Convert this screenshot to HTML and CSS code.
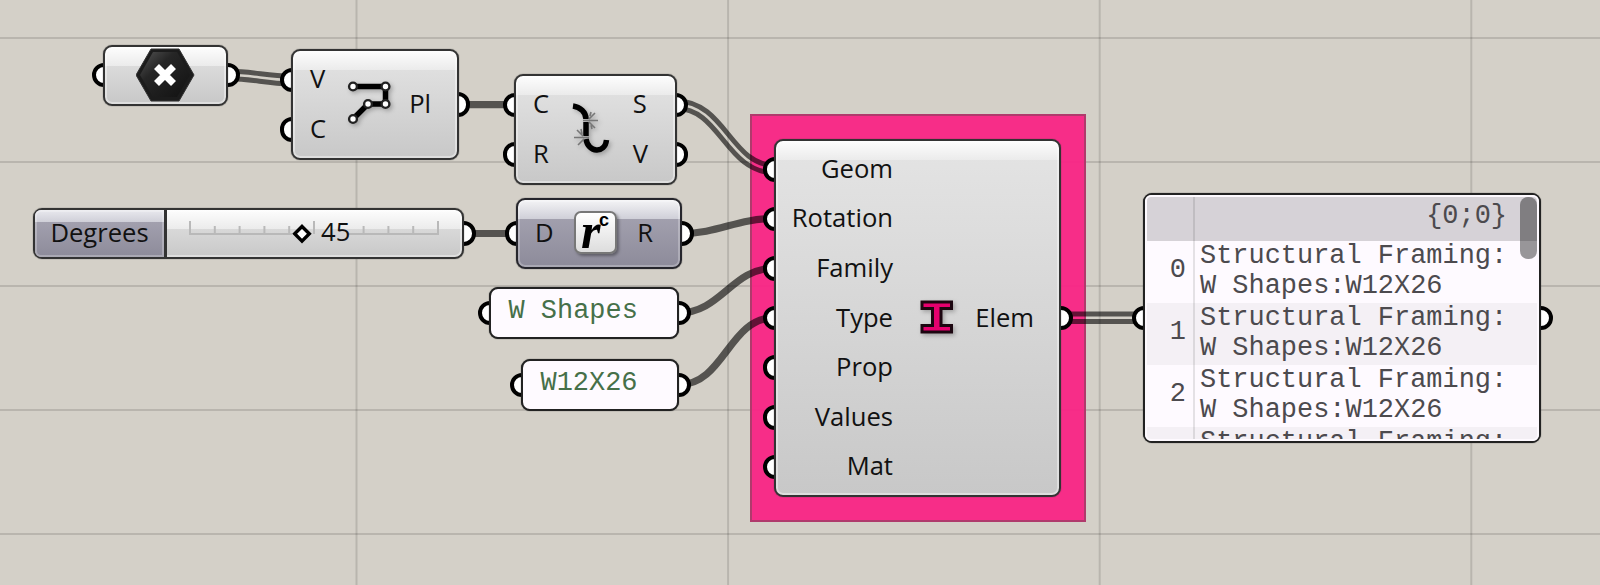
FILE: index.html
```html
<!DOCTYPE html>
<html lang="en">
<head>
    <meta charset="UTF-8">
    <meta name="viewport" content="width=device-width, initial-scale=1.0">
    <title>Structural Framing</title>
    <link rel="stylesheet" href="styles.css">
</head>
<body>
    <div class="canvas">
        <div class="group"></div>

        <!-- WIRES -->
        <svg class="wires" width="1600" height="585" viewBox="0 0 1600 585">
            <defs>
                <mask id="split" maskUnits="userSpaceOnUse" x="0" y="0" width="1600" height="585">
                    <rect width="1600" height="585" fill="#fff"/>
                    <g fill="none" stroke="#000" stroke-width="2.5">
                        <path d="M229 75C254 75 266 80 291 80"/>
                        <path d="M677 104.7C722 104.7 729 169 774 169"/>
                        <path d="M1060 317.8H1143"/>
                    </g>
                </mask>
            </defs>
            <g class="list" mask="url(#split)">
                <path d="M229 75C254 75 266 80 291 80"/>
                <path d="M677 104.7C722 104.7 729 169 774 169"/>
                <path d="M1060 317.8H1143"/>
            </g>
            <g class="item">
                <path d="M459 104.7H514"/>
                <path d="M463 233.5H516"/>
                <path d="M681 233.5C719 233.5 736 218.6 774 218.6"/>
                <path d="M679 312.8C721 312.8 732 268.2 774 268.2"/>
                <path d="M679 384.7C724 384.7 729 317.8 774 317.8"/>
            </g>
        </svg>

        <!-- COMPONENTS -->
        <div class="node vertices">
            <i class="port in"></i>
            <svg width="60" height="54" viewBox="0 0 60 54">
                <defs>
                    <linearGradient id="hex" x1="0" y1="0" x2="1" y2="1">
                        <stop offset="0" stop-color="#555"/>
                        <stop offset=".35" stop-color="#262626"/>
                        <stop offset="1" stop-color="#111"/>
                    </linearGradient>
                </defs>
                <path d="M15 1H43L58 27L43 53H15L0 27Z" fill="#1c1c1c" stroke="#333" stroke-width="1"/>
                <path d="M17 4H41L54 27L41 49H17L4 27Z" fill="url(#hex)"/>
                <path d="M20.500 18.500L37.500 35.500M37.500 18.500L20.500 35.500" stroke="#fff" stroke-width="7"/>
            </svg>
            <i class="port out"></i>
        </div>

        <div class="node polyline">
            <div class="inputs">
                <div class="row"><i class="port in"></i>V</div>
                <div class="row"><i class="port in"></i>C</div>
            </div>
            <svg class="icon" width="50" height="50" viewBox="0 0 50 50">
                <path d="M10 6.500H42.500V24H25L10 39" fill="none" stroke="#000" stroke-width="5.500"/>
                <g fill="#fff" stroke="#222" stroke-width="2.4">
                    <circle cx="10" cy="6.500" r="3.900"/>
                    <circle cx="42.500" cy="6.500" r="3.900"/>
                    <circle cx="42.500" cy="24" r="3.900"/>
                    <circle cx="25" cy="24" r="3.900"/>
                    <circle cx="10" cy="39" r="3.900"/>
                </g>
            </svg>
            <div class="outputs">
                <div class="row">Pl<i class="port out"></i></div>
            </div>
        </div>

        <div class="node shatter">
            <div class="inputs">
                <div class="row"><i class="port in"></i>C</div>
                <div class="row"><i class="port in"></i>R</div>
            </div>
            <svg class="icon" width="50" height="60" viewBox="0 0 50 60">
                <g fill="none" stroke="#000" stroke-width="5.500">
                    <path d="M7 6C14 7 20 12 20 19"/>
                    <path d="M20 22V36"/>
                    <path d="M20 39C22 53 39 54 40.500 40"/>
                </g>
                <g stroke="#777" stroke-width="1.6">
                    <path d="M17 20.500H32M23 19L29 13M23 22L29 28M24 16L25 12M25 25L26 29"/>
                    <path d="M8 37.500H23M11 30L17 36M12 45L18 39M15 29L16 34"/>
                </g>
            </svg>
            <div class="outputs">
                <div class="row">S<i class="port out"></i></div>
                <div class="row">V<i class="port out"></i></div>
            </div>
        </div>

        <div class="node slider">
            <div class="name">Degrees</div>
            <div class="track">
                <svg width="290" height="47" viewBox="0 0 290 47">
                    <path class="rail" d="M23 11V24H125M181 24H271V11M47.8 16V24M72.6 16V24M97.4 16V24M122.2 16V24M147 11V24M196.6 16V24M221.4 16V24M246.2 16V24"/>
                    <path d="M135 16.500L142.300 23.800L135 31.100L127.700 23.800Z" fill="#fff" stroke="#000" stroke-width="3.4"/>
                </svg>
                <span class="value">45</span>
            </div>
            <i class="port out"></i>
        </div>

        <div class="node radians dark">
            <div class="inputs">
                <div class="row"><i class="port in"></i>D</div>
            </div>
            <div class="badge">r<sup>c</sup></div>
            <div class="outputs">
                <div class="row">R<i class="port out"></i></div>
            </div>
        </div>

        <div class="node note family"><i class="port in"></i>W Shapes<i class="port out"></i></div>
        <div class="node note type"><i class="port in"></i>W12X26<i class="port out"></i></div>

        <div class="node element">
            <div class="inputs">
                <div class="row"><i class="port in"></i>Geom</div>
                <div class="row"><i class="port in"></i>Rotation</div>
                <div class="row"><i class="port in"></i>Family</div>
                <div class="row"><i class="port in"></i>Type</div>
                <div class="row"><i class="port in"></i>Prop</div>
                <div class="row"><i class="port in"></i>Values</div>
                <div class="row"><i class="port in"></i>Mat</div>
            </div>
            <svg class="icon" width="34" height="36" viewBox="0 0 34 36">
                <path d="M2 2H31.500V8.500H21V25.500H31.500V32H2V25.500H12.500V8.500H2Z" fill="#e6006e" stroke="#1c0610" stroke-width="3"/>
            </svg>
            <div class="outputs">
                <div class="row">Elem<i class="port out"></i></div>
            </div>
        </div>

        <!-- OUTPUT PANEL -->
        <div class="node panel">
            <i class="port in"></i>
            <div class="sheet">
                <div class="path">{0;0}</div>
                <div class="line"><span>0</span><p>Structural Framing:<br>W Shapes:W12X26</p></div>
                <div class="line odd"><span>1</span><p>Structural Framing:<br>W Shapes:W12X26</p></div>
                <div class="line"><span>2</span><p>Structural Framing:<br>W Shapes:W12X26</p></div>
                <div class="line odd last"><span></span><p>Structural Framing:</p></div>
                <div class="scrollbar"></div>
            </div>
            <i class="port out"></i>
        </div>
    </div>
</body>
</html>
```
FILE: styles.css
```css
body {
    margin: 0;
    font-family: "Open Sans", "Noto Sans", sans-serif;
    font-size: 25.600px;
    color: #111;
}

.canvas {
    position: relative;
    isolation: isolate;
    width: 1600px;
    height: 585px;
    overflow: hidden;
    background-color: #d4d0c8;
    background-image:
        linear-gradient(90deg, rgba(0,0,0,0.13) 2px, transparent 2px),
        linear-gradient(rgba(0,0,0,0.13) 2px, transparent 2px);
    background-size: 371.6px 100%, 100% 124px;
    background-position: 355.5px 0, 0 37px;
}

.group {
    position: absolute;
    z-index: -3;
    left: 749.500px;
    top: 113.500px;
    width: 336px;
    height: 408px;
    box-sizing: border-box;
    border: 2px solid #b03a6c;
    background: rgba(249, 36, 133, 0.95);
}

.wires {
    position: absolute;
    z-index: -2;
    left: 0;
    top: 0;
    fill: none;
}

.list {
    stroke: rgba(0,0,0,0.6);
    stroke-width: 12.4px;
}

.item {
    stroke: rgba(0,0,0,0.6);
    stroke-width: 7.2px;
}

/* nodes */
.node {
    position: absolute;
    display: flex;
    align-items: center;
    justify-content: space-between;
    box-sizing: border-box;
    border: 2px solid #333;
    border-radius: 9px;
    background:
        linear-gradient(#fdfdfd, #ebebeb) 0 0 / 100% 19px no-repeat,
        linear-gradient(#e4e4e4, #c8c8c8);
    box-shadow: 0 0 1px #333, inset 0 0 0 2px rgba(255,255,255,0.4);
}

.dark {
    border-color: #26262c;
    background:
        linear-gradient(#f4f4f6, #cfcfd8) 0 0 / 100% 19px no-repeat,
        linear-gradient(#a9a7b5, #8d8b9a);
    box-shadow: 0 0 1px #222, inset 0 0 0 2px rgba(255,255,255,0.25);
}

.vertices { left: 103px; top: 44.500px; width: 125px; height: 61px; justify-content: center; }
.polyline { left: 291px; top: 49px; width: 168px; height: 111px; }
.shatter { left: 514px; top: 74px; width: 163px; height: 111px; }
.slider { left: 33px; top: 208px; width: 431px; height: 51px; }
.radians { left: 516px; top: 198px; width: 166px; height: 71px; }
.family { left: 489px; top: 287px; width: 190px; height: 52px; }
.type { left: 521px; top: 359px; width: 158px; height: 52px; }
.element { left: 774px; top: 139px; width: 287px; height: 358px; }
.panel { left: 1143px; top: 193px; width: 398px; height: 250px; }

.row {
    position: relative;
    display: flex;
    align-items: center;
    box-sizing: border-box;
    height: 49.6px;
    padding-bottom: 2px;
}

.inputs .row { padding-left: 17px; }
.outputs .row { padding-right: 27px; }
.polyline .outputs .row { padding-right: 26px; }
.element .inputs { width: 117px; }
.element .inputs .row { justify-content: flex-end; padding-left: 0; }
.element .outputs .row { padding-right: 25px; }
.element .icon { margin-left: 5px; }

/* ports sit behind the node edge */
.port {
    position: absolute;
    z-index: -1;
    top: 50%;
    width: 16.500px;
    height: 16.500px;
    margin-top: -12.2px;
    border: 4px solid #000;
    border-radius: 50%;
    background: #fff;
}

.in { left: -13.500px; }
.out { right: -13.500px; }

.icon {
    filter: drop-shadow(2px 2px 2px rgba(0,0,0,0.25));
}

/* slider */
.slider .name {
    display: flex;
    align-items: center;
    justify-content: center;
    box-sizing: border-box;
    width: 132px;
    height: 100%;
    padding-bottom: 2px;
    border-right: 3px solid #333;
    border-radius: 6px 0 0 6px;
    background:
        linear-gradient(#e9e9ee, #cfcfd8) 0 0 / 100% 12px no-repeat,
        linear-gradient(#a9a7b5, #8d8b9a);
    box-shadow: inset 0 0 0 2px rgba(255,255,255,0.25);
}

.slider .track {
    position: relative;
    flex: 1;
    height: 47px;
}

.rail {
    fill: none;
    stroke: #b9b9b9;
    stroke-width: 2px;
}

.value {
    position: absolute;
    left: 154px;
    top: 4px;
}

.badge {
    position: relative;
    box-sizing: border-box;
    width: 43px;
    height: 43px;
    margin-top: -2px;
    padding-left: 5px;
    border: 2px solid #777;
    border-radius: 7px;
    background: linear-gradient(#fff, #ddd);
    box-shadow: 2px 2px 3px rgba(0,0,0,0.35);
    font: italic bold 50px/36px "Liberation Serif", serif;
    color: #000;
}

.badge sup {
    position: absolute;
    right: 6px;
    top: 0;
    font: bold 18px/14px "Liberation Sans", sans-serif;
}

/* panels */
.note {
    border-color: #222;
    padding-left: 17.500px;
    padding-bottom: 4px;
    background: #fefaff;
    box-shadow: 0 0 1px #222;
    font: 26.950px "Liberation Mono", monospace;
    color: #467049;
}

.panel {
    border-color: #222;
    background: #fefaff;
    box-shadow: 0 0 1px #222;
    font: 26.950px/30px "Liberation Mono", monospace;
    color: #4c4a4e;
}

.sheet {
    position: relative;
    flex: 1;
    height: 100%;
    box-sizing: border-box;
    overflow: hidden;
    border: 2px solid #fefaff;
    border-radius: 6px;
    background: linear-gradient(90deg, transparent 46px, rgba(0,0,0,0.1) 46px, rgba(0,0,0,0.1) 48px, transparent 48px);
}

.path {
    height: 44px;
    padding-right: 30px;
    background: rgba(0,0,0,0.155);
    line-height: 38px;
    text-align: right;
}

.line {
    display: flex;
    align-items: center;
    height: 62px;
}

.odd { background: rgba(0,0,0,0.04); }

.line span {
    width: 39px;
    margin-top: -4px;
    text-align: right;
}

.line p {
    margin: -3px 0 0 14px;
    white-space: nowrap;
}

.last {
    align-items: flex-start;
}

.last p { margin-top: 0; }

.scrollbar {
    position: absolute;
    right: 0;
    top: 0;
    width: 17px;
    height: 62px;
    border-radius: 8px;
    background: rgba(0,0,0,0.4);
}
```
